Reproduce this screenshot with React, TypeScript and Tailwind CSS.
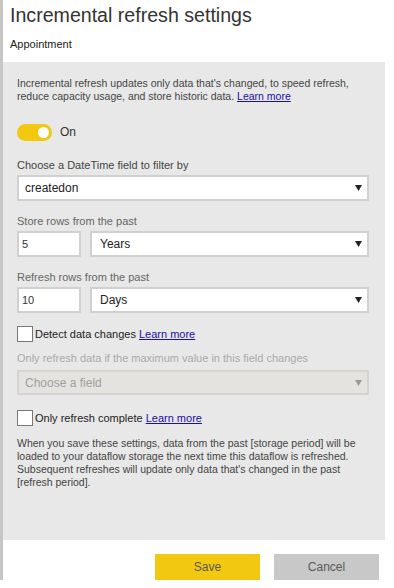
import React, { useState } from "react";

function Caret({ muted }: { muted?: boolean }) {
  return (
    <svg width="7" height="6" viewBox="0 0 7 6" className={muted ? "text-[#9a9a9a]" : "text-[#222]"}>
      <path d="M0 0 L7 0 L3.5 6 Z" fill="currentColor" />
    </svg>
  );
}

function Select({
  value,
  className,
  muted,
  pad = "pl-[6px]",
}: {
  value: string;
  className?: string;
  muted?: boolean;
  pad?: string;
}) {
  return (
    <div
      className={`flex items-center justify-between border-2 pr-[5px] text-[12px] ${pad} ${
        muted ? "h-[25px] border-[#d6d4d1] bg-[#e5e3e0] text-[#a0a0a0]" : "h-[26px] border-[#d0d0d0] bg-white text-[#222]"
      } ${className ?? ""}`}
    >
      <span>{value}</span>
      <Caret muted={muted} />
    </div>
  );
}

function NumberBox({ value }: { value: string }) {
  return (
    <div className="flex h-[26px] w-[64px] items-center border-2 border-[#d0d0d0] bg-white pl-[3px] text-[11px] text-[#333]">
      {value}
    </div>
  );
}

function Check({ label }: { label: string }) {
  const [on, setOn] = useState(false);
  return (
    <label className="flex items-center gap-[2px] text-[11px] leading-[13px] text-[#222]">
      <span
        onClick={() => setOn(!on)}
        className="flex h-[16px] w-[16px] items-center justify-center border border-[#777] bg-white"
      >
        {on && <span className="h-2 w-2 bg-[#333]" />}
      </span>
      <span>
        {label} <a className="text-[#1a0dab] underline">Learn more</a>
      </span>
    </label>
  );
}

export default function App() {
  const [enabled, setEnabled] = useState(true);

  return (
    <div
      className="flex h-[588px] w-[394px] flex-col bg-white text-[#333]"
      style={{ fontFamily: '"Liberation Sans", Arial, sans-serif' }}
    >
      <div className="flex h-[580px] flex-col border-l-[3px] border-[#c6c6c6]">
        <div className="pl-[7px] pt-[1px]">
          <h1 className="text-[19.6px] leading-[28px] text-[#333]">Incremental refresh settings</h1>
          <p className="mt-[8px] text-[11px] leading-[14px] text-[#222]">Appointment</p>
        </div>

        <div className="mt-[11px] mr-[9px] flex h-[478px] flex-col bg-[#e8e8e8] pl-[14px] pr-[16px] pt-[15px]">
          <p className="mr-[-8px] text-[10.5px] leading-[13px] text-[#444]">
            Incremental refresh updates only data that's changed, to speed refresh, reduce capacity usage, and store
            historic data. <a className="text-[#1a0dab] underline">Learn more</a>
          </p>

          <div className="mt-[20px] flex items-center gap-[8px]">
            <button
              onClick={() => setEnabled(!enabled)}
              className={`flex h-[17px] w-[35px] items-center rounded-full px-[3px] ${
                enabled ? "justify-end bg-[#f2c811]" : "justify-start bg-[#b0b0b0]"
              }`}
            >
              <span className="h-[11px] w-[11px] rounded-full bg-white" />
            </button>
            <span className="text-[12px] text-[#333]">{enabled ? "On" : "Off"}</span>
          </div>

          <p className="mt-[18px] text-[11px] leading-[13px] text-[#444]">Choose a DateTime field to filter by</p>
          <Select value="createdon" className="mt-[3px]" />

          <p className="mt-[14px] text-[11px] leading-[13px] text-[#666]">Store rows from the past</p>
          <div className="mt-[3px] flex gap-[9px]">
            <NumberBox value="5" />
            <Select value="Years" className="flex-1" pad="pl-[8px]" />
          </div>

          <p className="mt-[14px] text-[11px] leading-[13px] text-[#666]">Refresh rows from the past</p>
          <div className="mt-[3px] flex gap-[9px]">
            <NumberBox value="10" />
            <Select value="Days" className="flex-1" pad="pl-[8px]" />
          </div>

          <div className="mt-[13px]">
            <Check label="Detect data changes" />
          </div>

          <p className="mt-[10px] text-[11px] leading-[13px] text-[#aaa]">
            Only refresh data if the maximum value in this field changes
          </p>
          <Select value="Choose a field" className="mt-[5px]" muted />

          <div className="mt-[15px]">
            <Check label="Only refresh complete" />
          </div>

          <p className="mt-[11px] mr-[-8px] text-[10.5px] leading-[13px] text-[#444]">
            When you save these settings, data from the past [storage period] will be loaded to your dataflow storage
            the next time this dataflow is refreshed. Subsequent refreshes will update only data that's changed in the
            past [refresh period].
          </p>
        </div>

        <div className="mt-[14px] mr-[15px] flex justify-end gap-[14px]">
          <button className="h-[26px] w-[105px] bg-[#f2c811] text-[12px] font-light text-[#5a5a5a]">Save</button>
          <button className="h-[26px] w-[105px] bg-[#c8c8c8] text-[12px] font-light text-[#5a5a5a]">Cancel</button>
        </div>
      </div>
    </div>
  );
}
